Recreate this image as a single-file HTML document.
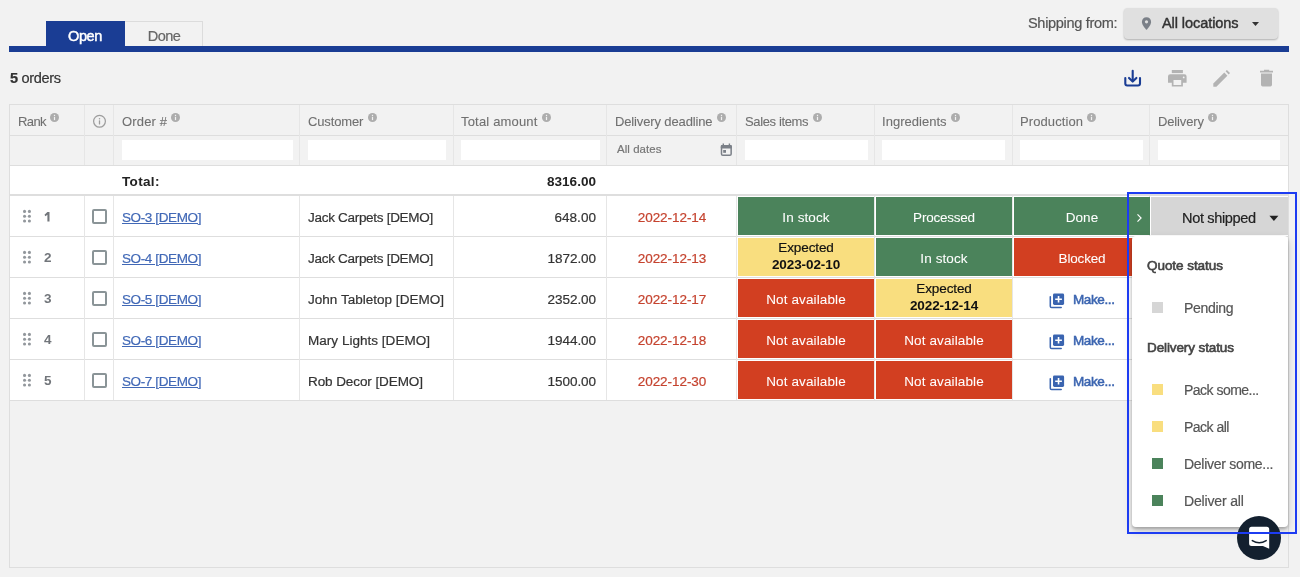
<!DOCTYPE html>
<html><head><meta charset="utf-8"><style>
html,body{margin:0;padding:0;background:#f2f2f2;}
#root{position:relative;width:1300px;height:577px;overflow:hidden;font-family:"Liberation Sans", sans-serif;background:#f2f2f2;}
#root>div,#root>svg{position:absolute;}
</style></head><body><div id="root">
<div style="left:46px;top:21px;width:79px;height:25px;background:#1a3d94"></div>
<div style="left:-114.6px;width:400px;text-align:center;top:29.07px;font-size:14.56px;line-height:14.56px;color:#fff;font-weight:400;white-space:nowrap;will-change:transform;letter-spacing:-0.398px;-webkit-text-stroke:0.45px #fff;">Open</div>
<div style="left:125px;top:21px;width:78px;height:25px;border-top:1px solid #dcdcdc;border-right:1px solid #dcdcdc;box-sizing:border-box"></div>
<div style="left:-36.48px;width:400px;text-align:center;top:29.07px;font-size:14.56px;line-height:14.56px;color:#666;font-weight:400;white-space:nowrap;will-change:transform;letter-spacing:-0.56px;-webkit-text-stroke:0.2px #666;">Done</div>
<div style="left:9px;top:46px;width:1280px;height:6px;background:#1a3d94"></div>
<div style="left:1028px;top:16.17px;font-size:14.56px;line-height:14.56px;color:#555;font-weight:400;white-space:nowrap;will-change:transform;letter-spacing:-0.331px;-webkit-text-stroke:0.2px #555;">Shipping from:</div>
<div style="left:1124px;top:8px;width:154px;height:31px;background:#e0e0e0;border-radius:4px;box-shadow:0 1px 2px rgba(0,0,0,0.28)"></div>
<svg style="left:1141px;top:16.8px" width="11" height="14" viewBox="0 0 11 14"><path d="M5.5 0.3C2.8 0.3 0.9 2.3 0.9 4.9c0 3.3 4.6 7.9 4.6 7.9s4.6-4.6 4.6-7.9C10.1 2.3 8.2 0.3 5.5 0.3z" fill="#7b8088"/><circle cx="5.5" cy="4.8" r="1.6" fill="#e0e0e0"/></svg>
<div style="left:1162px;top:16.07px;font-size:14.56px;line-height:14.56px;color:#333;font-weight:400;white-space:nowrap;will-change:transform;letter-spacing:-0.085px;-webkit-text-stroke:0.42px #333;">All locations</div>
<svg style="left:1252px;top:22px" width="7" height="4" viewBox="0 0 7 4"><path d="M0 0h7L3.5 4z" fill="#333"/></svg>
<div style="left:9.5px;top:71.27px;font-size:14.56px;line-height:14.56px;color:#333;font-weight:400;white-space:nowrap;will-change:transform;letter-spacing:-0.339px;-webkit-text-stroke:0.2px #333;"><b>5</b> orders</div>
<svg style="left:1120px;top:66px" width="24" height="24" viewBox="1120 66 24 24"><path d="M1125.3 78v5.5q0 2 2 2h10.7q2 0 2-2V78" fill="none" stroke="#1a3d94" stroke-width="2.1" stroke-linecap="round"/><path d="M1132.7 70.8V81" fill="none" stroke="#1a3d94" stroke-width="2.1" stroke-linecap="round"/><path d="M1129 77.9l3.7 3.7 3.7-3.7" fill="none" stroke="#1a3d94" stroke-width="2.1" stroke-linecap="round" stroke-linejoin="round"/></svg>
<svg style="left:1166px;top:68px" width="23" height="21" viewBox="1166 68 23 21"><rect x="1171.8" y="70" width="11.1" height="3.1" fill="#b3b3b3"/><path d="M1168 82.8v-6.4q0-2.2 2.2-2.2h14.2q2.2 0 2.2 2.2v6.4h-3.7v3.7h-11.1v-3.7z" fill="#b3b3b3"/><rect x="1173.5" y="80" width="7.7" height="5" fill="#f2f2f2"/><circle cx="1183.7" cy="77.4" r="0.9" fill="#f2f2f2"/></svg>
<svg style="left:1213px;top:70px" width="18" height="17" viewBox="0 0 18 17"><path d="M0.3 13.6L11.3 2.6l3.1 3.1L3.4 16.7H0.3z" fill="#b3b3b3"/><path d="M12.6 1.3l1.3-1.3 3.1 3.1-1.3 1.3z" fill="#b3b3b3"/></svg>
<svg style="left:1258px;top:68px" width="18" height="20" viewBox="1258 68 18 20"><path d="M1260 70.7h4v-1h5.2v1h3.8v1.7h-13z" fill="#b3b3b3"/><path d="M1261 73.6h11v11.2q0 1.7-1.7 1.7h-7.6q-1.7 0-1.7-1.7z" fill="#b3b3b3"/></svg>
<div style="left:9px;top:104px;width:1280px;height:464px;border:1px solid #dedede;box-sizing:border-box;background:#f2f2f2"></div>
<div style="left:10px;top:166px;width:1278px;height:235px;background:#fff"></div>
<div style="left:10px;top:135px;width:1278px;height:1px;background:#dedede"></div>
<div style="left:10px;top:165px;width:1278px;height:1px;background:#dedede"></div>
<div style="left:10px;top:194px;width:1278px;height:2px;background:#dedede"></div>
<div style="left:10px;top:236px;width:1278px;height:1px;background:#dedede"></div>
<div style="left:10px;top:277px;width:1278px;height:1px;background:#dedede"></div>
<div style="left:10px;top:318px;width:1278px;height:1px;background:#dedede"></div>
<div style="left:10px;top:359px;width:1278px;height:1px;background:#dedede"></div>
<div style="left:10px;top:400px;width:1278px;height:1px;background:#dedede"></div>
<div style="left:84px;top:105px;width:1px;height:60px;background:#e6e6e6"></div>
<div style="left:84px;top:196px;width:1px;height:204px;background:#e6e6e6"></div>
<div style="left:113px;top:105px;width:1px;height:60px;background:#e6e6e6"></div>
<div style="left:113px;top:196px;width:1px;height:204px;background:#e6e6e6"></div>
<div style="left:299px;top:105px;width:1px;height:60px;background:#e6e6e6"></div>
<div style="left:299px;top:196px;width:1px;height:204px;background:#e6e6e6"></div>
<div style="left:453px;top:105px;width:1px;height:60px;background:#e6e6e6"></div>
<div style="left:453px;top:196px;width:1px;height:204px;background:#e6e6e6"></div>
<div style="left:606px;top:105px;width:1px;height:60px;background:#e6e6e6"></div>
<div style="left:606px;top:196px;width:1px;height:204px;background:#e6e6e6"></div>
<div style="left:736px;top:105px;width:1px;height:60px;background:#e6e6e6"></div>
<div style="left:736px;top:196px;width:1px;height:204px;background:#e6e6e6"></div>
<div style="left:874px;top:105px;width:1px;height:60px;background:#e6e6e6"></div>
<div style="left:874px;top:196px;width:1px;height:204px;background:#e6e6e6"></div>
<div style="left:1012px;top:105px;width:1px;height:60px;background:#e6e6e6"></div>
<div style="left:1012px;top:196px;width:1px;height:204px;background:#e6e6e6"></div>
<div style="left:1149px;top:105px;width:1px;height:60px;background:#e6e6e6"></div>
<div style="left:1149px;top:196px;width:1px;height:204px;background:#e6e6e6"></div>
<div style="left:18px;top:115.0px;font-size:13.0px;line-height:13.0px;color:#707070;font-weight:400;white-space:nowrap;will-change:transform;letter-spacing:-0.62px;-webkit-text-stroke:0.1px #707070;">Rank</div>
<svg style="left:50px;top:113px" width="9" height="9" viewBox="0 0 9 9"><circle cx="4.5" cy="4.5" r="4.5" fill="#adadad"/><rect x="3.9" y="3.8" width="1.2" height="3.3" fill="#f2f2f2"/><rect x="3.9" y="1.8" width="1.2" height="1.2" fill="#f2f2f2"/></svg>
<div style="left:122px;top:115.0px;font-size:13.0px;line-height:13.0px;color:#707070;font-weight:400;white-space:nowrap;will-change:transform;letter-spacing:0.154px;-webkit-text-stroke:0.1px #707070;">Order #</div>
<svg style="left:171px;top:113px" width="9" height="9" viewBox="0 0 9 9"><circle cx="4.5" cy="4.5" r="4.5" fill="#adadad"/><rect x="3.9" y="3.8" width="1.2" height="3.3" fill="#f2f2f2"/><rect x="3.9" y="1.8" width="1.2" height="1.2" fill="#f2f2f2"/></svg>
<div style="left:308px;top:115.0px;font-size:13.0px;line-height:13.0px;color:#707070;font-weight:400;white-space:nowrap;will-change:transform;letter-spacing:-0.137px;-webkit-text-stroke:0.1px #707070;">Customer</div>
<svg style="left:368px;top:113px" width="9" height="9" viewBox="0 0 9 9"><circle cx="4.5" cy="4.5" r="4.5" fill="#adadad"/><rect x="3.9" y="3.8" width="1.2" height="3.3" fill="#f2f2f2"/><rect x="3.9" y="1.8" width="1.2" height="1.2" fill="#f2f2f2"/></svg>
<div style="left:461px;top:115.0px;font-size:13.0px;line-height:13.0px;color:#707070;font-weight:400;white-space:nowrap;will-change:transform;letter-spacing:0.178px;-webkit-text-stroke:0.1px #707070;">Total amount</div>
<svg style="left:541.6px;top:113px" width="9" height="9" viewBox="0 0 9 9"><circle cx="4.5" cy="4.5" r="4.5" fill="#adadad"/><rect x="3.9" y="3.8" width="1.2" height="3.3" fill="#f2f2f2"/><rect x="3.9" y="1.8" width="1.2" height="1.2" fill="#f2f2f2"/></svg>
<div style="left:615px;top:115.0px;font-size:13.0px;line-height:13.0px;color:#707070;font-weight:400;white-space:nowrap;will-change:transform;letter-spacing:-0.133px;-webkit-text-stroke:0.1px #707070;">Delivery deadline</div>
<svg style="left:717px;top:113px" width="9" height="9" viewBox="0 0 9 9"><circle cx="4.5" cy="4.5" r="4.5" fill="#adadad"/><rect x="3.9" y="3.8" width="1.2" height="3.3" fill="#f2f2f2"/><rect x="3.9" y="1.8" width="1.2" height="1.2" fill="#f2f2f2"/></svg>
<div style="left:745px;top:115.0px;font-size:13.0px;line-height:13.0px;color:#707070;font-weight:400;white-space:nowrap;will-change:transform;letter-spacing:-0.37px;-webkit-text-stroke:0.1px #707070;">Sales items</div>
<svg style="left:813px;top:113px" width="9" height="9" viewBox="0 0 9 9"><circle cx="4.5" cy="4.5" r="4.5" fill="#adadad"/><rect x="3.9" y="3.8" width="1.2" height="3.3" fill="#f2f2f2"/><rect x="3.9" y="1.8" width="1.2" height="1.2" fill="#f2f2f2"/></svg>
<div style="left:882.4px;top:115.0px;font-size:13.0px;line-height:13.0px;color:#707070;font-weight:400;white-space:nowrap;will-change:transform;letter-spacing:0.027px;-webkit-text-stroke:0.1px #707070;">Ingredients</div>
<svg style="left:951px;top:113px" width="9" height="9" viewBox="0 0 9 9"><circle cx="4.5" cy="4.5" r="4.5" fill="#adadad"/><rect x="3.9" y="3.8" width="1.2" height="3.3" fill="#f2f2f2"/><rect x="3.9" y="1.8" width="1.2" height="1.2" fill="#f2f2f2"/></svg>
<div style="left:1020px;top:115.0px;font-size:13.0px;line-height:13.0px;color:#707070;font-weight:400;white-space:nowrap;will-change:transform;letter-spacing:0.094px;-webkit-text-stroke:0.1px #707070;">Production</div>
<svg style="left:1087.4px;top:113px" width="9" height="9" viewBox="0 0 9 9"><circle cx="4.5" cy="4.5" r="4.5" fill="#adadad"/><rect x="3.9" y="3.8" width="1.2" height="3.3" fill="#f2f2f2"/><rect x="3.9" y="1.8" width="1.2" height="1.2" fill="#f2f2f2"/></svg>
<div style="left:1158px;top:115.0px;font-size:13.0px;line-height:13.0px;color:#707070;font-weight:400;white-space:nowrap;will-change:transform;letter-spacing:-0.138px;-webkit-text-stroke:0.1px #707070;">Delivery</div>
<svg style="left:1208.4px;top:113px" width="9" height="9" viewBox="0 0 9 9"><circle cx="4.5" cy="4.5" r="4.5" fill="#adadad"/><rect x="3.9" y="3.8" width="1.2" height="3.3" fill="#f2f2f2"/><rect x="3.9" y="1.8" width="1.2" height="1.2" fill="#f2f2f2"/></svg>
<svg style="left:92px;top:114px" width="15" height="15" viewBox="92 114 15 15"><circle cx="99.5" cy="121.3" r="5.9" fill="none" stroke="#9d9d9d" stroke-width="1.25"/><circle cx="99.5" cy="118.7" r="0.75" fill="#9d9d9d"/><rect x="98.85" y="120.2" width="1.3" height="4.3" rx="0.5" fill="#9d9d9d"/></svg>
<div style="left:122px;top:140px;width:171px;height:20px;background:#fff"></div>
<div style="left:308px;top:140px;width:138px;height:20px;background:#fff"></div>
<div style="left:461px;top:140px;width:139px;height:20px;background:#fff"></div>
<div style="left:745px;top:140px;width:123px;height:20px;background:#fff"></div>
<div style="left:882px;top:140px;width:123px;height:20px;background:#fff"></div>
<div style="left:1020px;top:140px;width:123px;height:20px;background:#fff"></div>
<div style="left:1158px;top:140px;width:122px;height:20px;background:#fff"></div>
<div style="left:616.6px;top:143.82px;font-size:11.44px;line-height:11.44px;color:#777;font-weight:400;white-space:nowrap;will-change:transform;letter-spacing:0.066px;-webkit-text-stroke:0.2px #777;">All dates</div>
<svg style="left:718px;top:141px" width="17" height="18" viewBox="718 141 17 18"><rect x="721.5" y="145.65" width="9.65" height="9.7" rx="1.3" fill="none" stroke="#7b8088" stroke-width="1.5"/><rect x="720.75" y="144.9" width="11.15" height="3.5" rx="1" fill="#7b8088"/><rect x="722.6" y="143.5" width="1.4" height="2" fill="#7b8088"/><rect x="728.7" y="143.5" width="1.4" height="2" fill="#7b8088"/><rect x="723.2" y="150" width="2.8" height="2.8" fill="#7b8088"/></svg>
<div style="left:122px;top:174.96px;font-size:13.52px;line-height:13.52px;color:#222;font-weight:700;white-space:nowrap;will-change:transform;letter-spacing:0.321px;">Total:</div>
<div style="left:296.02px;width:300px;text-align:right;top:174.96px;font-size:13.52px;line-height:13.52px;color:#222;font-weight:700;white-space:nowrap;will-change:transform;letter-spacing:0.023px;">8316.00</div>
<svg style="left:20px;top:195px" width="14" height="40" viewBox="20 195 14 40"><g fill="#92979c"><circle cx="24.55" cy="211.4" r="1.55"/><circle cx="29.4" cy="211.4" r="1.55"/><circle cx="24.55" cy="216.2" r="1.55"/><circle cx="29.4" cy="216.2" r="1.55"/><circle cx="24.55" cy="221" r="1.55"/><circle cx="29.4" cy="221" r="1.55"/></g></svg>
<svg style="left:40px;top:195px" width="14" height="40" viewBox="40 195 14 40"><path d="M47.4 212.1h2.1v9.3h-2.1v-6.7l-2 1.5-0.9-1.5z" fill="#72767b"/></svg>
<div style="left:92px;top:209px;width:15px;height:15px;border:2px solid #8a9497;border-radius:2px;box-sizing:border-box"></div>
<div style="left:122px;top:210.66px;font-size:13.52px;line-height:13.52px;color:#4168b6;font-weight:400;white-space:nowrap;will-change:transform;letter-spacing:-0.396px;-webkit-text-stroke:0.2px #4168b6;text-decoration:underline;">SO-3 [DEMO]</div>
<div style="left:307.5px;top:210.66px;font-size:13.52px;line-height:13.52px;color:#333;font-weight:400;white-space:nowrap;will-change:transform;letter-spacing:-0.302px;-webkit-text-stroke:0.2px #333;">Jack Carpets [DEMO]</div>
<div style="left:296.03px;width:300px;text-align:right;top:210.66px;font-size:13.52px;line-height:13.52px;color:#333;font-weight:400;white-space:nowrap;will-change:transform;letter-spacing:0.031px;-webkit-text-stroke:0.2px #333;">648.00</div>
<div style="left:472.46px;width:400px;text-align:center;top:210.66px;font-size:13.52px;line-height:13.52px;color:#c5432f;font-weight:400;white-space:nowrap;will-change:transform;letter-spacing:-0.071px;-webkit-text-stroke:0.2px #c5432f;">2022-12-14</div>
<div style="left:738px;top:197px;width:136px;height:38px;background:#4b835b"></div>
<div style="left:606.05px;width:400px;text-align:center;top:210.66px;font-size:13.52px;line-height:13.52px;color:#fff;font-weight:400;white-space:nowrap;will-change:transform;letter-spacing:0.103px;-webkit-text-stroke:0.05px #fff;">In stock</div>
<div style="left:876px;top:197px;width:136px;height:38px;background:#4b835b"></div>
<div style="left:743.88px;width:400px;text-align:center;top:210.66px;font-size:13.52px;line-height:13.52px;color:#fff;font-weight:400;white-space:nowrap;will-change:transform;letter-spacing:-0.232px;-webkit-text-stroke:0.05px #fff;">Processed</div>
<div style="left:1014px;top:197px;width:136px;height:38px;background:#4b835b"></div>
<div style="left:882.03px;width:400px;text-align:center;top:210.66px;font-size:13.52px;line-height:13.52px;color:#fff;font-weight:400;white-space:nowrap;will-change:transform;letter-spacing:0.062px;-webkit-text-stroke:0.05px #fff;">Done</div>
<svg style="left:20px;top:236px" width="14" height="40" viewBox="20 195 14 40"><g fill="#92979c"><circle cx="24.55" cy="211.4" r="1.55"/><circle cx="29.4" cy="211.4" r="1.55"/><circle cx="24.55" cy="216.2" r="1.55"/><circle cx="29.4" cy="216.2" r="1.55"/><circle cx="24.55" cy="221" r="1.55"/><circle cx="29.4" cy="221" r="1.55"/></g></svg>
<div style="left:44px;top:251.26px;font-size:13.52px;line-height:13.52px;color:#72767b;font-weight:700;white-space:nowrap;will-change:transform;letter-spacing:-1.031px;">2</div>
<div style="left:92px;top:250px;width:15px;height:15px;border:2px solid #8a9497;border-radius:2px;box-sizing:border-box"></div>
<div style="left:122px;top:251.66px;font-size:13.52px;line-height:13.52px;color:#4168b6;font-weight:400;white-space:nowrap;will-change:transform;letter-spacing:-0.396px;-webkit-text-stroke:0.2px #4168b6;text-decoration:underline;">SO-4 [DEMO]</div>
<div style="left:307.5px;top:251.66px;font-size:13.52px;line-height:13.52px;color:#333;font-weight:400;white-space:nowrap;will-change:transform;letter-spacing:-0.302px;-webkit-text-stroke:0.2px #333;">Jack Carpets [DEMO]</div>
<div style="left:295.94px;width:300px;text-align:right;top:251.66px;font-size:13.52px;line-height:13.52px;color:#333;font-weight:400;white-space:nowrap;will-change:transform;letter-spacing:-0.06px;-webkit-text-stroke:0.2px #333;">1872.00</div>
<div style="left:472.46px;width:400px;text-align:center;top:251.66px;font-size:13.52px;line-height:13.52px;color:#c5432f;font-weight:400;white-space:nowrap;will-change:transform;letter-spacing:-0.071px;-webkit-text-stroke:0.2px #c5432f;">2022-12-13</div>
<div style="left:738px;top:238px;width:136px;height:38px;background:#f9de7f"></div>
<div style="left:605.94px;width:400px;text-align:center;top:240.76px;font-size:13.52px;line-height:13.52px;color:#111;font-weight:400;white-space:nowrap;will-change:transform;letter-spacing:-0.123px;-webkit-text-stroke:0.2px #111;">Expected</div>
<div style="left:605.95px;width:400px;text-align:center;top:258.16px;font-size:13.52px;line-height:13.52px;color:#111;font-weight:700;white-space:nowrap;will-change:transform;letter-spacing:-0.093px;">2023-02-10</div>
<div style="left:876px;top:238px;width:136px;height:38px;background:#4b835b"></div>
<div style="left:744.05px;width:400px;text-align:center;top:251.66px;font-size:13.52px;line-height:13.52px;color:#fff;font-weight:400;white-space:nowrap;will-change:transform;letter-spacing:0.103px;-webkit-text-stroke:0.05px #fff;">In stock</div>
<div style="left:1014px;top:238px;width:136px;height:38px;background:#d23f21"></div>
<div style="left:881.91px;width:400px;text-align:center;top:251.66px;font-size:13.52px;line-height:13.52px;color:#fff;font-weight:400;white-space:nowrap;will-change:transform;letter-spacing:-0.182px;-webkit-text-stroke:0.05px #fff;">Blocked</div>
<svg style="left:20px;top:277px" width="14" height="40" viewBox="20 195 14 40"><g fill="#92979c"><circle cx="24.55" cy="211.4" r="1.55"/><circle cx="29.4" cy="211.4" r="1.55"/><circle cx="24.55" cy="216.2" r="1.55"/><circle cx="29.4" cy="216.2" r="1.55"/><circle cx="24.55" cy="221" r="1.55"/><circle cx="29.4" cy="221" r="1.55"/></g></svg>
<div style="left:44px;top:292.26px;font-size:13.52px;line-height:13.52px;color:#72767b;font-weight:700;white-space:nowrap;will-change:transform;letter-spacing:-1.031px;">3</div>
<div style="left:92px;top:291px;width:15px;height:15px;border:2px solid #8a9497;border-radius:2px;box-sizing:border-box"></div>
<div style="left:122px;top:292.66px;font-size:13.52px;line-height:13.52px;color:#4168b6;font-weight:400;white-space:nowrap;will-change:transform;letter-spacing:-0.396px;-webkit-text-stroke:0.2px #4168b6;text-decoration:underline;">SO-5 [DEMO]</div>
<div style="left:307.5px;top:292.66px;font-size:13.52px;line-height:13.52px;color:#333;font-weight:400;white-space:nowrap;will-change:transform;letter-spacing:0.014px;-webkit-text-stroke:0.2px #333;">John Tabletop [DEMO]</div>
<div style="left:295.94px;width:300px;text-align:right;top:292.66px;font-size:13.52px;line-height:13.52px;color:#333;font-weight:400;white-space:nowrap;will-change:transform;letter-spacing:-0.06px;-webkit-text-stroke:0.2px #333;">2352.00</div>
<div style="left:472.46px;width:400px;text-align:center;top:292.66px;font-size:13.52px;line-height:13.52px;color:#c5432f;font-weight:400;white-space:nowrap;will-change:transform;letter-spacing:-0.071px;-webkit-text-stroke:0.2px #c5432f;">2022-12-17</div>
<div style="left:738px;top:279px;width:136px;height:38px;background:#d23f21"></div>
<div style="left:606.06px;width:400px;text-align:center;top:292.66px;font-size:13.52px;line-height:13.52px;color:#fff;font-weight:400;white-space:nowrap;will-change:transform;letter-spacing:0.113px;-webkit-text-stroke:0.05px #fff;">Not available</div>
<div style="left:876px;top:279px;width:136px;height:38px;background:#f9de7f"></div>
<div style="left:743.94px;width:400px;text-align:center;top:281.76px;font-size:13.52px;line-height:13.52px;color:#111;font-weight:400;white-space:nowrap;will-change:transform;letter-spacing:-0.123px;-webkit-text-stroke:0.2px #111;">Expected</div>
<div style="left:743.95px;width:400px;text-align:center;top:299.16px;font-size:13.52px;line-height:13.52px;color:#111;font-weight:700;white-space:nowrap;will-change:transform;letter-spacing:-0.093px;">2022-12-14</div>
<svg style="left:1046px;top:289px" width="22" height="22" viewBox="1046 289 22 22"><path d="M1050.3 296.8v9.5q0 1.3 1.3 1.3h9.6" fill="none" stroke="#3a64b0" stroke-width="1.55" stroke-linecap="round"/><rect x="1053" y="293.5" width="11.1" height="11.5" rx="1.4" fill="#3a64b0"/><path d="M1058.55 295.9v6.7M1055.2 299.25h6.7" stroke="#fff" stroke-width="1.6"/></svg>
<div style="left:1073px;top:293.26px;font-size:13.52px;line-height:13.52px;color:#3a64b0;font-weight:400;white-space:nowrap;will-change:transform;letter-spacing:-0.388px;-webkit-text-stroke:0.5px #3a64b0;">Make...</div>
<svg style="left:20px;top:318px" width="14" height="40" viewBox="20 195 14 40"><g fill="#92979c"><circle cx="24.55" cy="211.4" r="1.55"/><circle cx="29.4" cy="211.4" r="1.55"/><circle cx="24.55" cy="216.2" r="1.55"/><circle cx="29.4" cy="216.2" r="1.55"/><circle cx="24.55" cy="221" r="1.55"/><circle cx="29.4" cy="221" r="1.55"/></g></svg>
<div style="left:44px;top:333.26px;font-size:13.52px;line-height:13.52px;color:#72767b;font-weight:700;white-space:nowrap;will-change:transform;letter-spacing:-1.031px;">4</div>
<div style="left:92px;top:332px;width:15px;height:15px;border:2px solid #8a9497;border-radius:2px;box-sizing:border-box"></div>
<div style="left:122px;top:333.66px;font-size:13.52px;line-height:13.52px;color:#4168b6;font-weight:400;white-space:nowrap;will-change:transform;letter-spacing:-0.396px;-webkit-text-stroke:0.2px #4168b6;text-decoration:underline;">SO-6 [DEMO]</div>
<div style="left:307.5px;top:333.66px;font-size:13.52px;line-height:13.52px;color:#333;font-weight:400;white-space:nowrap;will-change:transform;letter-spacing:0.019px;-webkit-text-stroke:0.2px #333;">Mary Lights [DEMO]</div>
<div style="left:295.94px;width:300px;text-align:right;top:333.66px;font-size:13.52px;line-height:13.52px;color:#333;font-weight:400;white-space:nowrap;will-change:transform;letter-spacing:-0.06px;-webkit-text-stroke:0.2px #333;">1944.00</div>
<div style="left:472.46px;width:400px;text-align:center;top:333.66px;font-size:13.52px;line-height:13.52px;color:#c5432f;font-weight:400;white-space:nowrap;will-change:transform;letter-spacing:-0.071px;-webkit-text-stroke:0.2px #c5432f;">2022-12-18</div>
<div style="left:738px;top:320px;width:136px;height:38px;background:#d23f21"></div>
<div style="left:606.06px;width:400px;text-align:center;top:333.66px;font-size:13.52px;line-height:13.52px;color:#fff;font-weight:400;white-space:nowrap;will-change:transform;letter-spacing:0.113px;-webkit-text-stroke:0.05px #fff;">Not available</div>
<div style="left:876px;top:320px;width:136px;height:38px;background:#d23f21"></div>
<div style="left:744.06px;width:400px;text-align:center;top:333.66px;font-size:13.52px;line-height:13.52px;color:#fff;font-weight:400;white-space:nowrap;will-change:transform;letter-spacing:0.113px;-webkit-text-stroke:0.05px #fff;">Not available</div>
<svg style="left:1046px;top:330px" width="22" height="22" viewBox="1046 289 22 22"><path d="M1050.3 296.8v9.5q0 1.3 1.3 1.3h9.6" fill="none" stroke="#3a64b0" stroke-width="1.55" stroke-linecap="round"/><rect x="1053" y="293.5" width="11.1" height="11.5" rx="1.4" fill="#3a64b0"/><path d="M1058.55 295.9v6.7M1055.2 299.25h6.7" stroke="#fff" stroke-width="1.6"/></svg>
<div style="left:1073px;top:334.26px;font-size:13.52px;line-height:13.52px;color:#3a64b0;font-weight:400;white-space:nowrap;will-change:transform;letter-spacing:-0.388px;-webkit-text-stroke:0.5px #3a64b0;">Make...</div>
<svg style="left:20px;top:359px" width="14" height="40" viewBox="20 195 14 40"><g fill="#92979c"><circle cx="24.55" cy="211.4" r="1.55"/><circle cx="29.4" cy="211.4" r="1.55"/><circle cx="24.55" cy="216.2" r="1.55"/><circle cx="29.4" cy="216.2" r="1.55"/><circle cx="24.55" cy="221" r="1.55"/><circle cx="29.4" cy="221" r="1.55"/></g></svg>
<div style="left:44px;top:374.26px;font-size:13.52px;line-height:13.52px;color:#72767b;font-weight:700;white-space:nowrap;will-change:transform;letter-spacing:-1.031px;">5</div>
<div style="left:92px;top:373px;width:15px;height:15px;border:2px solid #8a9497;border-radius:2px;box-sizing:border-box"></div>
<div style="left:122px;top:374.66px;font-size:13.52px;line-height:13.52px;color:#4168b6;font-weight:400;white-space:nowrap;will-change:transform;letter-spacing:-0.396px;-webkit-text-stroke:0.2px #4168b6;text-decoration:underline;">SO-7 [DEMO]</div>
<div style="left:307.5px;top:374.66px;font-size:13.52px;line-height:13.52px;color:#333;font-weight:400;white-space:nowrap;will-change:transform;letter-spacing:-0.095px;-webkit-text-stroke:0.2px #333;">Rob Decor [DEMO]</div>
<div style="left:295.94px;width:300px;text-align:right;top:374.66px;font-size:13.52px;line-height:13.52px;color:#333;font-weight:400;white-space:nowrap;will-change:transform;letter-spacing:-0.06px;-webkit-text-stroke:0.2px #333;">1500.00</div>
<div style="left:472.46px;width:400px;text-align:center;top:374.66px;font-size:13.52px;line-height:13.52px;color:#c5432f;font-weight:400;white-space:nowrap;will-change:transform;letter-spacing:-0.071px;-webkit-text-stroke:0.2px #c5432f;">2022-12-30</div>
<div style="left:738px;top:361px;width:136px;height:38px;background:#d23f21"></div>
<div style="left:606.06px;width:400px;text-align:center;top:374.66px;font-size:13.52px;line-height:13.52px;color:#fff;font-weight:400;white-space:nowrap;will-change:transform;letter-spacing:0.113px;-webkit-text-stroke:0.05px #fff;">Not available</div>
<div style="left:876px;top:361px;width:136px;height:38px;background:#d23f21"></div>
<div style="left:744.06px;width:400px;text-align:center;top:374.66px;font-size:13.52px;line-height:13.52px;color:#fff;font-weight:400;white-space:nowrap;will-change:transform;letter-spacing:0.113px;-webkit-text-stroke:0.05px #fff;">Not available</div>
<svg style="left:1046px;top:371px" width="22" height="22" viewBox="1046 289 22 22"><path d="M1050.3 296.8v9.5q0 1.3 1.3 1.3h9.6" fill="none" stroke="#3a64b0" stroke-width="1.55" stroke-linecap="round"/><rect x="1053" y="293.5" width="11.1" height="11.5" rx="1.4" fill="#3a64b0"/><path d="M1058.55 295.9v6.7M1055.2 299.25h6.7" stroke="#fff" stroke-width="1.6"/></svg>
<div style="left:1073px;top:375.26px;font-size:13.52px;line-height:13.52px;color:#3a64b0;font-weight:400;white-space:nowrap;will-change:transform;letter-spacing:-0.388px;-webkit-text-stroke:0.5px #3a64b0;">Make...</div>
<svg style="left:1136px;top:213px" width="7" height="10" viewBox="0 0 7 10"><path d="M1.5 1.3l3.6 3.7-3.6 3.7" fill="none" stroke="#fff" stroke-width="1.15"/></svg>
<div style="left:1151px;top:197px;width:137px;height:38px;background:#d6d6d6"></div>
<div style="left:1182.4px;top:210.57px;font-size:14.56px;line-height:14.56px;color:#222;font-weight:400;white-space:nowrap;will-change:transform;letter-spacing:-0.354px;-webkit-text-stroke:0.2px #222;">Not shipped</div>
<svg style="left:1268px;top:214px" width="12" height="9" viewBox="1268 214 12 9"><path d="M1269.4 215.8h9L1273.9 221z" fill="#222"/></svg>
<div style="left:1132px;top:236px;width:156px;height:291px;background:#fff;border-radius:4px;box-shadow:0 2px 3px rgba(0,0,0,0.22),0 4px 10px rgba(0,0,0,0.18)"></div>
<div style="left:1147px;top:259.16px;font-size:13.52px;line-height:13.52px;color:#444;font-weight:400;white-space:nowrap;will-change:transform;letter-spacing:-0.058px;-webkit-text-stroke:0.6px #444;">Quote status</div>
<div style="left:1147px;top:341.46px;font-size:13.52px;line-height:13.52px;color:#444;font-weight:400;white-space:nowrap;will-change:transform;letter-spacing:-0.117px;-webkit-text-stroke:0.6px #444;">Delivery status</div>
<div style="left:1152px;top:302px;width:11px;height:11px;background:#d6d6d6"></div>
<div style="left:1184.4px;top:300.52px;font-size:14.04px;line-height:14.04px;color:#555;font-weight:400;white-space:nowrap;will-change:transform;letter-spacing:-0.317px;-webkit-text-stroke:0.2px #555;">Pending</div>
<div style="left:1152px;top:384px;width:11px;height:11px;background:#f9de7f"></div>
<div style="left:1184.4px;top:382.52px;font-size:14.04px;line-height:14.04px;color:#555;font-weight:400;white-space:nowrap;will-change:transform;letter-spacing:-0.537px;-webkit-text-stroke:0.2px #555;">Pack some...</div>
<div style="left:1152px;top:421px;width:11px;height:11px;background:#f9de7f"></div>
<div style="left:1184.4px;top:419.82px;font-size:14.04px;line-height:14.04px;color:#555;font-weight:400;white-space:nowrap;will-change:transform;letter-spacing:-0.534px;-webkit-text-stroke:0.2px #555;">Pack all</div>
<div style="left:1152px;top:458px;width:11px;height:11px;background:#4b835b"></div>
<div style="left:1184.4px;top:457.12px;font-size:14.04px;line-height:14.04px;color:#555;font-weight:400;white-space:nowrap;will-change:transform;letter-spacing:-0.298px;-webkit-text-stroke:0.2px #555;">Deliver some...</div>
<div style="left:1152px;top:495px;width:11px;height:11px;background:#4b835b"></div>
<div style="left:1184.4px;top:494.42px;font-size:14.04px;line-height:14.04px;color:#555;font-weight:400;white-space:nowrap;will-change:transform;letter-spacing:-0.171px;-webkit-text-stroke:0.2px #555;">Deliver all</div>
<div style="left:1237px;top:515.6px;width:44px;height:44px;border-radius:50%;background:#13202f"></div>
<svg style="left:1240px;top:520px" width="40" height="36" viewBox="1240 520 40 36"><path d="M1251.6 526.8h15.1a2.5 2.5 0 0 1 2.5 2.5v19.5l-6.3-2.8h-11.3a2.5 2.5 0 0 1-2.5-2.5v-14.2a2.5 2.5 0 0 1 2.5-2.5z" fill="#fff"/><path d="M1252.3 540.6c4.3 2.6 9.6 2.6 13.9 0" fill="none" stroke="#13202f" stroke-width="1.5" stroke-linecap="round"/></svg>
<div style="left:1127px;top:192px;width:170px;height:342px;border:2px solid #1d3cf2;box-sizing:border-box"></div>
</div></body></html>
